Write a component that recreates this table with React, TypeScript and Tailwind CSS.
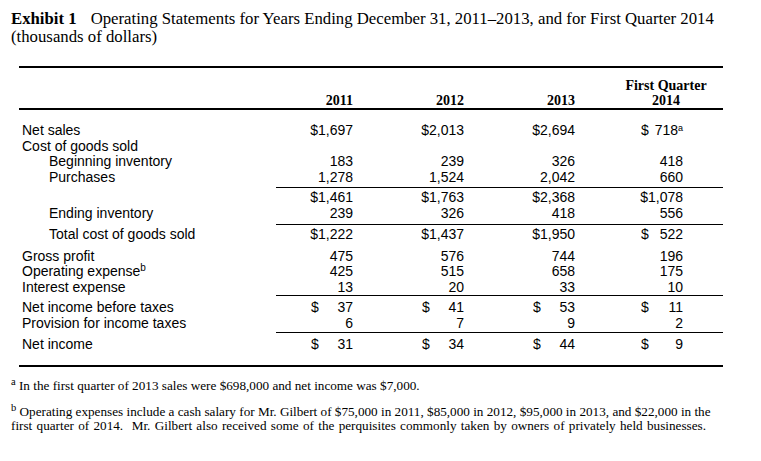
import React from 'react';

type Cell = string | { d: true; v: string; sup?: string };

interface Row {
  label: string;
  indent?: boolean;
  labelSup?: string;
  cells: Cell[];
  top: string;
}

const split = (v: string, sup?: string): Cell => ({ d: true, v, sup });

const rows: (Row | { rule: string })[] = [
  { label: 'Net sales', top: 'mt-[13px]', cells: ['$1,697', '$2,013', '$2,694', split('718', 'a')] },
  { label: 'Cost of goods sold', top: '', cells: ['', '', '', ''] },
  { label: 'Beginning inventory', indent: true, top: '', cells: ['183', '239', '326', '418'] },
  { label: 'Purchases', indent: true, top: '', cells: ['1,278', '1,524', '2,042', '660'] },
  { rule: 'mt-[2px]' },
  { label: '', top: 'mt-[2px]', cells: ['$1,461', '$1,763', '$2,368', '$1,078'] },
  { label: 'Ending inventory', indent: true, top: '', cells: ['239', '326', '418', '556'] },
  { rule: 'mt-[2.5px]' },
  { label: 'Total cost of goods sold', indent: true, top: 'mt-[2px]', cells: ['$1,222', '$1,437', '$1,950', split('522')] },
  { label: 'Gross profit', top: 'mt-[6.5px]', cells: ['475', '576', '744', '196'] },
  { label: 'Operating expense', labelSup: 'b', top: '', cells: ['425', '515', '658', '175'] },
  { label: 'Interest expense', top: '', cells: ['13', '20', '33', '10'] },
  { rule: 'mt-0' },
  { label: 'Net income before taxes', top: 'mt-[4px]', cells: [split('37'), split('41'), split('53'), split('11')] },
  { label: 'Provision for income taxes', top: '', cells: ['6', '7', '9', '2'] },
  { rule: 'mt-[1px]' },
  { label: 'Net income', top: 'mt-[3.5px]', cells: [split('31'), split('34'), split('44'), split('9')] },
];

const grid = 'grid grid-cols-[223px_111px_111px_111px_108px_40px]';

function Value({ cell }: { cell: Cell }) {
  if (typeof cell === 'string') {
    return <div className="text-right">{cell}</div>;
  }
  return (
    <div className="flex justify-end">
      <div className="w-[42px] flex justify-between">
        <span>$</span>
        <span>
          {cell.v}
          {cell.sup && <sup className="text-[9px]">{cell.sup}</sup>}
        </span>
      </div>
    </div>
  );
}

export default function App() {
  return (
    <div className="w-[761px] h-[461px] bg-white text-black overflow-hidden font-['Liberation_Serif',serif]">
      {/* Title */}
      <div className="pt-[10px] pl-[11px] text-[16.75px] leading-[18px]">
        <div className="flex">
          <span className="font-bold">Exhibit 1</span>
          <span className="ml-[14px]">Operating Statements for Years Ending December 31, 2011–2013, and for First Quarter 2014</span>
        </div>
        <div>(thousands of dollars)</div>
      </div>

      {/* Table */}
      <div className="ml-[19px] w-[704px] mt-[20px]">
        <div className="h-[2px] bg-black" />
        <div className={`${grid} pt-[10px] text-[14px] leading-[15px] font-bold`}>
          <div />
          <div className="text-right pt-[15px]">2011</div>
          <div className="text-right pt-[15px]">2012</div>
          <div className="text-right pt-[15px]">2013</div>
          <div className="relative">
            <div className="w-[82px] ml-[50px] text-center whitespace-nowrap">
              First Quarter
              <br />
              2014
            </div>
          </div>
          <div />
        </div>
        <div className="h-[2px] bg-black" />

        <div className="font-['Liberation_Sans',Arial,sans-serif] text-[14px] leading-[15.5px]">
          {rows.map((r, i) =>
            'rule' in r ? (
              <div key={i} className={`${r.rule} ml-[257px] h-[1px] bg-black`} />
            ) : (
              <div key={i} className={`${grid} ${r.top} h-[15.5px]`}>
                <div className={`whitespace-nowrap ${r.indent ? 'pl-[30px]' : 'pl-[3px]'}`}>
                  {r.label}
                  {r.labelSup && <sup className="text-[10px]">{r.labelSup}</sup>}
                </div>
                {r.cells.map((c, j) => (
                  <Value key={j} cell={c} />
                ))}
                <div />
              </div>
            )
          )}
        </div>
        <div className="mt-[13px] h-[2px] bg-black" />
      </div>

      {/* Footnotes */}
      <div className="pl-[11px] mt-[12px] text-[13.2px] leading-[13.5px] whitespace-pre">
        <div>
          <sup className="text-[10.5px]">a</sup> In the first quarter of 2013 sales were $698,000 and net income was $7,000.
        </div>
        <div className="mt-[12.5px]">
          <sup className="text-[10.5px]">b</sup> Operating expenses include a cash salary for Mr. Gilbert of $75,000 in 2011, $85,000 in 2012, $95,000 in 2013, and $22,000 in the
          <br />
          <span className="[word-spacing:1px]">
            first quarter of 2014.  Mr. Gilbert also received some of the perquisites commonly taken by owners of privately held businesses.
          </span>
        </div>
      </div>
    </div>
  );
}
